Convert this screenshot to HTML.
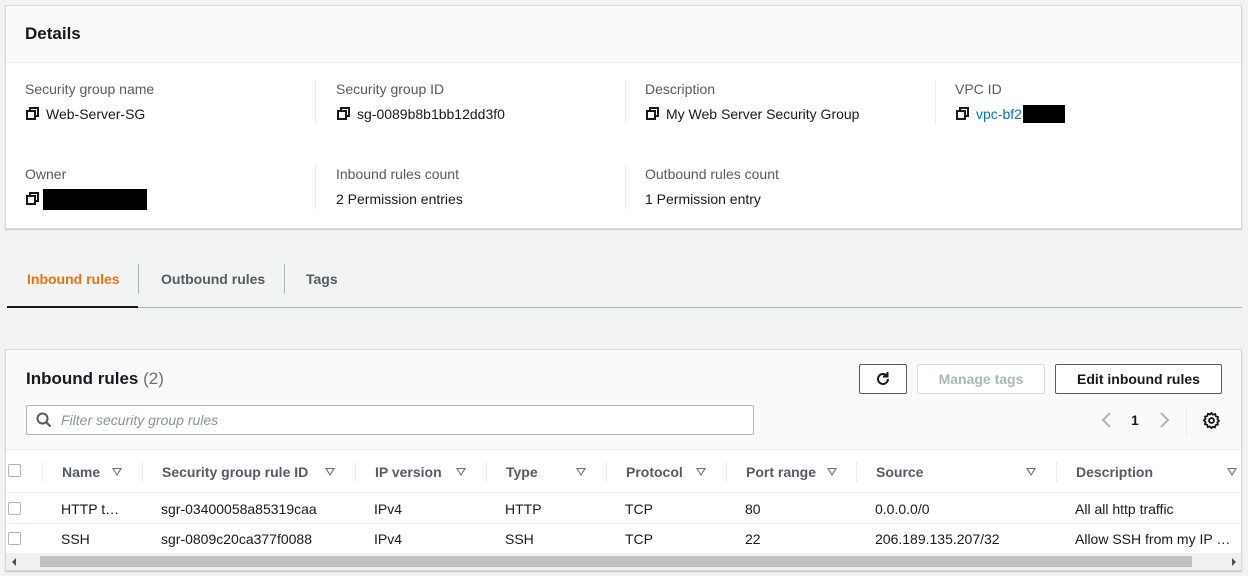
<!DOCTYPE html>
<html><head><meta charset="utf-8"><style>
*{margin:0;padding:0;box-sizing:border-box}
body{width:1248px;height:576px;background:#f2f3f3;font-family:"Liberation Sans",sans-serif;font-size:14px;color:#16191f;position:relative;overflow:hidden}
.a{position:absolute;white-space:nowrap}
.lbl{color:#545b64}
.cp{display:inline-block;width:13px;height:13px;position:relative;vertical-align:-1px;margin-right:7px}
.cp:before{content:"";position:absolute;left:3px;top:0;width:10px;height:10px;border:2px solid #16191f;box-sizing:border-box}
.cp:after{content:"";position:absolute;left:0;top:3px;width:10px;height:10px;border:2px solid #16191f;box-sizing:border-box;background:#fff}
.vs{position:absolute;width:1px;background:#eaeded}
.th{font-weight:bold;color:#545b64}
.tri{position:absolute;width:0;height:0;border-left:5px solid transparent;border-right:5px solid transparent;border-top:8px solid #687078}
.tri:after{content:"";position:absolute;left:-3px;top:-7px;border-left:3px solid transparent;border-right:3px solid transparent;border-top:5px solid #fff}
.cb{position:absolute;left:8px;width:13px;height:13px;border:1px solid #aab7b8;border-radius:2px;background:#fff}
.hs{position:absolute;width:1px;height:20px;background:#eaeded;top:462px}
</style></head><body>
<div class="a" style="left:5px;top:5px;width:1237px;height:224px;background:#fff;border:1px solid #d5dbdb;box-shadow:0 1px 1px rgba(0,0,0,.2)"></div>
<div class="a" style="left:6px;top:6px;width:1235px;height:57px;background:#fafafa;border-bottom:1px solid #eaeded"></div>
<div class="a" style="left:25px;top:24px;font-size:17px;font-weight:bold">Details</div>
<div class="vs" style="left:315px;top:80px;height:45px"></div>
<div class="vs" style="left:625px;top:80px;height:45px"></div>
<div class="vs" style="left:935px;top:80px;height:45px"></div>
<div class="vs" style="left:315px;top:164px;height:45px"></div>
<div class="vs" style="left:625px;top:164px;height:45px"></div>
<div class="a lbl" style="left:25px;top:81px">Security group name</div>
<div class="a" style="left:26px;top:106px"><span class="cp"></span>Web-Server-SG</div>
<div class="a lbl" style="left:336px;top:81px">Security group ID</div>
<div class="a" style="left:337px;top:106px"><span class="cp"></span>sg-0089b8b1bb12dd3f0</div>
<div class="a lbl" style="left:645px;top:81px">Description</div>
<div class="a" style="left:646px;top:106px"><span class="cp"></span>My Web Server Security Group</div>
<div class="a lbl" style="left:955px;top:81px">VPC ID</div>
<div class="a" style="left:956px;top:106px;color:#0073bb"><span class="cp"></span>vpc-bf2</div>
<div class="a" style="left:1023px;top:105px;width:42px;height:18px;background:#000"></div>
<div class="a lbl" style="left:25px;top:166px">Owner</div>
<div class="a" style="left:26px;top:191px"><span class="cp"></span></div>
<div class="a" style="left:43px;top:189px;width:104px;height:21px;background:#000"></div>
<div class="a lbl" style="left:336px;top:166px">Inbound rules count</div>
<div class="a" style="left:336px;top:191px">2 Permission entries</div>
<div class="a lbl" style="left:645px;top:166px">Outbound rules count</div>
<div class="a" style="left:645px;top:191px">1 Permission entry</div>
<div class="a" style="left:7px;top:307px;width:1235px;height:1px;background:#aab7b8"></div>
<div class="a" style="left:7px;top:306px;width:131px;height:2px;background:#16191f"></div>
<div class="a" style="left:27px;top:271px;font-weight:bold;color:#ec7211">Inbound rules</div>
<div class="a" style="left:138px;top:264px;width:1px;height:30px;background:#aab7b8"></div>
<div class="a" style="left:161px;top:271px;font-weight:bold;color:#545b64">Outbound rules</div>
<div class="a" style="left:284px;top:264px;width:1px;height:30px;background:#aab7b8"></div>
<div class="a" style="left:306px;top:271px;font-weight:bold;color:#545b64">Tags</div>
<div class="a" style="left:5px;top:349px;width:1237px;height:222px;background:#fff;border:1px solid #d5dbdb;box-shadow:0 1px 1px rgba(0,0,0,.2)"></div>
<div class="a" style="left:6px;top:350px;width:1235px;height:100px;background:#fafafa;border-bottom:1px solid #eaeded"></div>
<div class="a" style="left:26px;top:369px;font-size:17px;font-weight:bold">Inbound rules <span style="font-weight:normal;color:#687078">(2)</span></div>
<div class="a" style="left:859px;top:364px;width:48px;height:30px;border:1px solid #545b64;border-radius:2px;background:#fff">
<svg width="18" height="18" viewBox="0 0 18 18" style="position:absolute;left:14px;top:5px"><path d="M14 9a5 5 0 1 1-1.5-3.6" fill="none" stroke="#16191f" stroke-width="2"/><path d="M13.5 2v4.5H9" fill="none" stroke="#16191f" stroke-width="2"/></svg></div>
<div class="a" style="left:917px;top:364px;width:128px;height:30px;border:1px solid #d5dbdb;border-radius:2px;background:#fff;color:#aab7b8;font-weight:bold;text-align:center;line-height:28px">Manage tags</div>
<div class="a" style="left:1055px;top:364px;width:167px;height:30px;border:1px solid #545b64;border-radius:2px;background:#fff;color:#16191f;font-weight:bold;text-align:center;line-height:28px">Edit inbound rules</div>
<div class="a" style="left:26px;top:405px;width:728px;height:30px;border:1px solid #aab7b8;border-radius:2px;background:#fff"></div>
<svg class="a" style="left:36px;top:412px" width="16" height="16" viewBox="0 0 16 16"><circle cx="6.5" cy="6.5" r="5" fill="none" stroke="#545b64" stroke-width="2"/><path d="M10 10l4.5 4.5" stroke="#545b64" stroke-width="2.2"/></svg>
<div class="a" style="left:61px;top:412px;font-style:italic;color:#879596">Filter security group rules</div>
<svg class="a" style="left:1100px;top:411px" width="12" height="18" viewBox="0 0 12 18"><path d="M10 2L3 9l7 7" fill="none" stroke="#aab7b8" stroke-width="2"/></svg>
<div class="a" style="left:1131px;top:412px;font-weight:bold">1</div>
<svg class="a" style="left:1159px;top:411px" width="12" height="18" viewBox="0 0 12 18"><path d="M2 2l7 7-7 7" fill="none" stroke="#aab7b8" stroke-width="2"/></svg>
<div class="a" style="left:1186px;top:406px;width:1px;height:30px;background:#eaeded"></div>
<svg class="a" style="left:1203px;top:412px" width="17" height="17" viewBox="0 0 16 16"><path d="M8 1.5l1.5 1.6 2.2-.5.6 2.2 2.2.7-.6 2.1 1.5 1.6-1.6 1.5.5 2.2-2.2.6-.7 2.2-2.1-.6L8 16.5 6.5 14.9l-2.2.5-.6-2.2-2.2-.7.6-2.1L.5 8.8 2.1 7.3 1.6 5.1l2.2-.6.7-2.2 2.1.6z" transform="scale(.95) translate(.4 -.5)" fill="none" stroke="#16191f" stroke-width="1.8"/><circle cx="8" cy="8" r="2.3" fill="none" stroke="#16191f" stroke-width="1.8"/></svg>
<div class="a" style="left:6px;top:451px;width:1235px;height:42px;background:#fff;border-bottom:1px solid #eaeded"></div>
<div class="cb" style="top:464px"></div>
<div class="hs" style="left:42px"></div><div class="hs" style="left:142px"></div><div class="hs" style="left:355px"></div><div class="hs" style="left:486px"></div><div class="hs" style="left:606px"></div><div class="hs" style="left:726px"></div><div class="hs" style="left:856px"></div><div class="hs" style="left:1056px"></div>
<div class="a th" style="left:62px;top:464px">Name</div><div class="tri" style="left:112px;top:468px"></div>
<div class="a th" style="left:162px;top:464px">Security group rule ID</div><div class="tri" style="left:325px;top:468px"></div>
<div class="a th" style="left:375px;top:464px">IP version</div><div class="tri" style="left:456px;top:468px"></div>
<div class="a th" style="left:506px;top:464px">Type</div><div class="tri" style="left:576px;top:468px"></div>
<div class="a th" style="left:626px;top:464px">Protocol</div><div class="tri" style="left:696px;top:468px"></div>
<div class="a th" style="left:746px;top:464px">Port range</div><div class="tri" style="left:827px;top:468px"></div>
<div class="a th" style="left:876px;top:464px">Source</div><div class="tri" style="left:1026px;top:468px"></div>
<div class="a th" style="left:1076px;top:464px">Description</div><div class="tri" style="left:1227px;top:468px"></div>
<div class="a" style="left:6px;top:523px;width:1235px;height:1px;background:#eaeded"></div>
<div class="cb" style="top:502px"></div>
<div class="a" style="left:61px;top:501px">HTTP t…</div><div class="a" style="left:161px;top:501px">sgr-03400058a85319caa</div><div class="a" style="left:374px;top:501px">IPv4</div><div class="a" style="left:505px;top:501px">HTTP</div><div class="a" style="left:625px;top:501px">TCP</div><div class="a" style="left:745px;top:501px">80</div><div class="a" style="left:875px;top:501px">0.0.0.0/0</div><div class="a" style="left:1075px;top:501px">All all http traffic</div>
<div class="cb" style="top:532px"></div>
<div class="a" style="left:61px;top:531px">SSH</div><div class="a" style="left:161px;top:531px">sgr-0809c20ca377f0088</div><div class="a" style="left:374px;top:531px">IPv4</div><div class="a" style="left:505px;top:531px">SSH</div><div class="a" style="left:625px;top:531px">TCP</div><div class="a" style="left:745px;top:531px">22</div><div class="a" style="left:875px;top:531px">206.189.135.207/32</div><div class="a" style="left:1075px;top:531px">Allow SSH from my IP …</div>
<div class="a" style="left:6px;top:553px;width:1235px;height:17px;background:#f0f0f0"></div>
<div class="a" style="left:40px;top:556px;width:1152px;height:11px;background:#c1c1c1"></div>
<div class="a" style="left:12px;top:558px;border-top:4px solid transparent;border-bottom:4px solid transparent;border-right:4px solid #505050"></div>
<div class="a" style="left:1232px;top:558px;border-top:4px solid transparent;border-bottom:4px solid transparent;border-left:4px solid #505050"></div>
</body></html>
